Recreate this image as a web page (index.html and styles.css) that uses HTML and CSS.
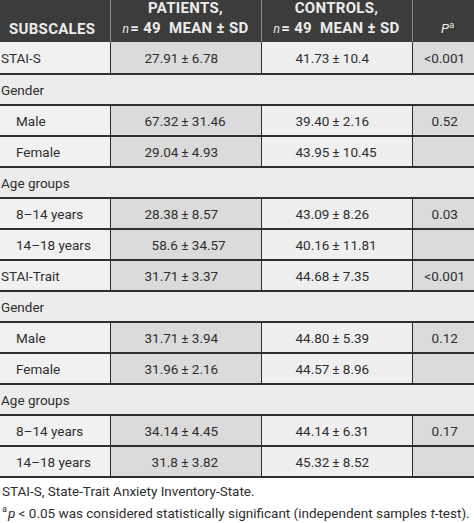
FILE: index.html
```html
<!DOCTYPE html>
<html>
<head>
<meta charset="utf-8">
<link rel="stylesheet" href="styles.css">
</head>
<body>
<div class="page">
<table class="tbl">
  <colgroup><col class="c1"><col class="c2"><col class="c3"><col class="c4"></colgroup>
  <thead>
    <tr>
      <th class="h-sub">SUBSCALES</th>
      <th class="h-grp"><div class="l1">PATIENTS,</div><div class="l2"><i class="n">n</i>= 49&nbsp; MEAN ± SD</div></th>
      <th class="h-grp"><div class="l1">CONTROLS,</div><div class="l2"><i class="n">n</i>= 49&nbsp; MEAN ± SD</div></th>
      <th class="h-p"><div class="l2"><i class="pp">P</i><sup>a</sup></div></th>
    </tr>
  </thead>
  <tbody>
    <tr class="first"><td class="name top">STAI-S</td><td class="pat"><span class="m">27.91</span> ± 6.78</td><td class="con"><span class="m">41.73</span> ± 10.4</td><td class="pv">&lt;0.001</td></tr>
    <tr class="grp"><td colspan="4">Gender</td></tr>
    <tr><td class="name">Male</td><td class="pat"><span class="m">67.32</span> ± 31.46</td><td class="con"><span class="m">39.40</span> ± 2.16</td><td class="pv">0.52</td></tr>
    <tr><td class="name">Female</td><td class="pat"><span class="m">29.04</span> ± 4.93</td><td class="con"><span class="m">43.95</span> ± 10.45</td><td class="pv"></td></tr>
    <tr class="grp"><td colspan="4">Age groups</td></tr>
    <tr><td class="name">8–14 years</td><td class="pat"><span class="m">28.38</span> ± 8.57</td><td class="con"><span class="m">43.09</span> ± 8.26</td><td class="pv">0.03</td></tr>
    <tr><td class="name">14–18 years</td><td class="pat"><span class="m">58.6</span> ± 34.57</td><td class="con"><span class="m">40.16</span> ± 11.81</td><td class="pv"></td></tr>
    <tr><td class="name top">STAI-Trait</td><td class="pat"><span class="m">31.71</span> ± 3.37</td><td class="con"><span class="m">44.68</span> ± 7.35</td><td class="pv">&lt;0.001</td></tr>
    <tr class="grp"><td colspan="4">Gender</td></tr>
    <tr><td class="name">Male</td><td class="pat"><span class="m">31.71</span> ± 3.94</td><td class="con"><span class="m">44.80</span> ± 5.39</td><td class="pv">0.12</td></tr>
    <tr><td class="name">Female</td><td class="pat"><span class="m">31.96</span> ± 2.16</td><td class="con"><span class="m">44.57</span> ± 8.96</td><td class="pv"></td></tr>
    <tr class="grp"><td colspan="4">Age groups</td></tr>
    <tr><td class="name">8–14 years</td><td class="pat"><span class="m">34.14</span> ± 4.45</td><td class="con"><span class="m">44.14</span> ± 6.31</td><td class="pv">0.17</td></tr>
    <tr><td class="name">14–18 years</td><td class="pat"><span class="m">31.8</span> ± 3.82</td><td class="con"><span class="m">45.32</span> ± 8.52</td><td class="pv"></td></tr>
  </tbody>
</table>
<div class="notes">
  <p>STAI-S, State-Trait Anxiety Inventory-State.</p>
  <p><sup>a</sup><i>p</i> &lt; 0.05 was considered statistically significant (independent samples <i>t</i>-test).</p>
</div>
</div>
</body>
</html>
```
FILE: styles.css
```css
html, body {
  margin: 0;
  padding: 0;
  background: #ffffff;
}
body {
  width: 474px;
  height: 523px;
  overflow: hidden;
  font-family: Roboto, "Liberation Sans", sans-serif;
  color: #2e2e2e;
}
.page {
  width: 477px;
}
.tbl {
  width: 477px;
  table-layout: fixed;
  border-collapse: collapse;
  border-spacing: 0;
}
.c1 { width: 110px; }
.c2 { width: 151px; }
.c3 { width: 151px; }
.c4 { width: 65px; }

thead th {
  background: #3c3c3c;
  color: #ececec;
  font-weight: bold;
  font-size: 15px;
  letter-spacing: 0.3px;
  padding: 0 0 3px 0;
  vertical-align: bottom;
  border-left: 1px solid #8a8a8a;
  text-align: center;
}
thead th:first-child { border-left: none; }
.h-sub {
  text-align: left;
  padding-left: 9px;
  line-height: 20px;
}
.h-grp .l1, .h-grp .l2, .h-p .l2 {
  line-height: 20px;
  white-space: nowrap;
}
.h-grp .l1 { margin-top: -2px; }
.n {
  font-weight: normal;
  font-size: 12px;
  margin-right: 1px;
}
.pp {
  font-weight: normal;
  font-size: 13px;
  margin-left: 6px;
}
.h-p sup {
  font-size: 9px;
  font-weight: normal;
  vertical-align: 5px;
  line-height: 0;
}

tbody td {
  height: 29px;
  padding: 0;
  font-size: 13.5px;
  border-bottom: 2px solid #2e2e2e;
  border-left: 1.5px solid #2e2e2e;
  white-space: nowrap;
  vertical-align: middle;
}
tbody tr.first td { height: 31px; }
tbody td:first-child { border-left: none; }
.name {
  background: #f1f1f1;
  padding-left: 16px;
}
.name.top { padding-left: 1px; }
.pat {
  background: #dbdbdb;
  padding-left: 34px;
}
.con {
  background: #efefef;
  padding-left: 34px;
}
.pv {
  background: #dbdbdb;
  text-align: center;
}
.m {
  display: inline-block;
  width: 4.4ch;
  text-align: right;
}
.grp td {
  background: #ececec;
  padding-left: 1px;
  border-left: none;
}

.notes {
  font-size: 13.5px;
  color: #2e2e2e;
  padding-left: 2px;
  padding-top: 2px;
}
.notes p {
  margin: 0;
  line-height: 22px;
  white-space: nowrap;
}
.notes sup {
  font-size: 9px;
  vertical-align: 6px;
  line-height: 0;
  margin-right: 1px;
}
```
